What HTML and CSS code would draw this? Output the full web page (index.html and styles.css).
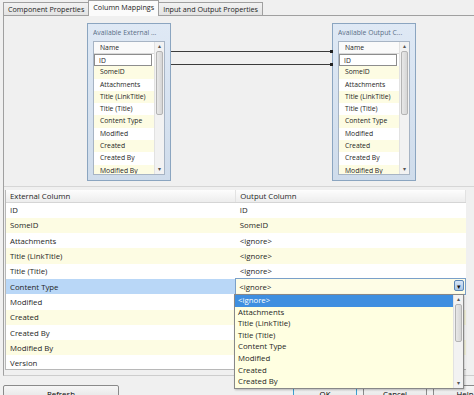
FILE: index.html
```html
<!DOCTYPE html>
<html lang="en">
<head>
    <meta charset="UTF-8">
    <title>Column Mappings</title>
    <link rel="stylesheet" href="styles.css">
</head>
<body>
<div class="window">
    <div class="tabs">
        <div class="tab">Component Properties</div>
        <div class="tab active">Column Mappings</div>
        <div class="tab">Input and Output Properties</div>
    </div>
    <div class="panel">
        <div class="diagram">
            <div class="node">
                <div class="node-title">Available External ...</div>
                <div class="node-list">
                    <div class="node-rows">
                        <div class="node-head">Name</div>
                        <div class="node-row focus">ID</div>
                        <div class="node-row alt">SomeID</div>
                        <div class="node-row">Attachments</div>
                        <div class="node-row alt">Title (LinkTitle)</div>
                        <div class="node-row">Title (Title)</div>
                        <div class="node-row alt">Content Type</div>
                        <div class="node-row">Modified</div>
                        <div class="node-row alt">Created</div>
                        <div class="node-row">Created By</div>
                        <div class="node-row alt">Modified By</div>
                    </div>
                    <div class="vscroll">
                        <span class="arr">&#9652;</span>
                        <span class="thumb"></span>
                        <span class="fill"></span>
                        <span class="arr">&#9662;</span>
                    </div>
                </div>
            </div>
            <div class="links">
                <div class="link"></div>
                <div class="link"></div>
            </div>
            <div class="node">
                <div class="node-title">Available Output C...</div>
                <div class="node-list">
                    <div class="node-rows">
                        <div class="node-head">Name</div>
                        <div class="node-row focus">ID</div>
                        <div class="node-row alt">SomeID</div>
                        <div class="node-row">Attachments</div>
                        <div class="node-row alt">Title (LinkTitle)</div>
                        <div class="node-row">Title (Title)</div>
                        <div class="node-row alt">Content Type</div>
                        <div class="node-row">Modified</div>
                        <div class="node-row alt">Created</div>
                        <div class="node-row">Created By</div>
                        <div class="node-row alt">Modified By</div>
                    </div>
                    <div class="vscroll">
                        <span class="arr">&#9652;</span>
                        <span class="thumb"></span>
                        <span class="fill"></span>
                        <span class="arr">&#9662;</span>
                    </div>
                </div>
            </div>
        </div>

        <div class="grid-wrap">
            <table class="grid">
                <thead>
                <tr><th>External Column</th><th>Output Column</th></tr>
                </thead>
                <tbody>
                <tr><td>ID</td><td>ID</td></tr>
                <tr class="alt"><td>SomeID</td><td>SomeID</td></tr>
                <tr><td>Attachments</td><td>&lt;ignore&gt;</td></tr>
                <tr class="alt"><td>Title (LinkTitle)</td><td>&lt;ignore&gt;</td></tr>
                <tr><td>Title (Title)</td><td>&lt;ignore&gt;</td></tr>
                <tr class="current"><td>Content Type</td><td class="editing"><span>&lt;ignore&gt;</span><span class="drop-btn">&#9662;</span></td></tr>
                <tr><td>Modified</td><td></td></tr>
                <tr class="alt"><td>Created</td><td></td></tr>
                <tr><td>Created By</td><td></td></tr>
                <tr class="alt"><td>Modified By</td><td></td></tr>
                <tr><td>Version</td><td></td></tr>
                </tbody>
            </table>
        </div>

        <div class="dropdown">
            <div class="drop-items">
                <div class="drop-item sel">&lt;ignore&gt;</div>
                <div class="drop-item">Attachments</div>
                <div class="drop-item">Title (LinkTitle)</div>
                <div class="drop-item">Title (Title)</div>
                <div class="drop-item">Content Type</div>
                <div class="drop-item">Modified</div>
                <div class="drop-item">Created</div>
                <div class="drop-item">Created By</div>
            </div>
            <div class="vscroll">
                <span class="arr">&#9652;</span>
                <span class="thumb"></span>
                <span class="fill"></span>
                <span class="arr">&#9662;</span>
            </div>
        </div>
    </div>

    <div class="footer">
        <button class="btn refresh">Refresh</button>
        <button class="btn ok">OK</button>
        <button class="btn">Cancel</button>
        <button class="btn">Help</button>
    </div>
</div>
</body>
</html>
```

FILE: styles.css
```css
body {
    margin: 0;
    background: #f0f0f0;
    font-family: "Open Sans", "Noto Sans", sans-serif;
    color: #1e1e1e;
}
.window {
    width: 474px;
    height: 395px;
    overflow: hidden;
    padding-left: 3px;
    box-sizing: border-box;
}
.tabs {
    display: flex;
    height: 15px;
    align-items: flex-end;
}
.tab {
    height: 13px;
    line-height: 12px;
    font-size: 7.2px;
    padding: 0 4px;
    border: 1px solid #a0a0a0;
    border-bottom: none;
    background: linear-gradient(#f2f2f2, #e3e3e3);
    box-sizing: border-box;
    margin-right: -1px;
}
.tab.active {
    height: 16px;
    line-height: 13px;
    background: #fbfbfb;
    position: relative;
    z-index: 1;
    margin-bottom: -1px;
}
.panel {
    border-top: 1px solid #a0a0a0;
    border-left: 1px solid #a0a0a0;
    border-bottom: 1px solid #cdcdcd;
    height: 361px;
    box-sizing: border-box;
    position: relative;
}

/* diagram */
.diagram {
    display: flex;
    align-items: flex-start;
    height: 171px;
    padding: 7px 0 0 83px;
    box-sizing: border-box;
    border-bottom: 1px solid #d6d6d6;
}
.node {
    width: 84px;
    height: 158px;
    box-sizing: border-box;
    border: 1px solid #8ba5c0;
    background: linear-gradient(#dfe9f5, #cfdceb);
    padding: 0 5px 5px 5px;
    display: flex;
    flex-direction: column;
}
.node-title {
    font-size: 6.8px;
    color: #5b6f86;
    height: 17px;
    line-height: 17px;
    white-space: nowrap;
    overflow: hidden;
}
.node-list {
    flex: 1;
    display: flex;
    background: #fff;
    border: 1px solid #a7b4c4;
    overflow: hidden;
}
.node-rows {
    flex: 1;
    font-size: 6.8px;
}
.node-head {
    height: 11px;
    line-height: 11px;
    padding-left: 6px;
    border-bottom: 1px solid #d8d8d8;
    background: #fafafa;
}
.node-row {
    height: 12.3px;
    line-height: 12.3px;
    padding-left: 6px;
    white-space: nowrap;
}
.node-row.alt {
    background: #fdfce3;
}
.node-row.focus {
    border: 1px solid #8d8d8d;
    box-sizing: border-box;
    padding-left: 4px;
    margin-right: 2px;
}
.vscroll {
    width: 9px;
    display: flex;
    flex-direction: column;
    background: #f2f2f2;
    border-left: 1px solid #e2e2e2;
}
.vscroll .arr {
    height: 9px;
    font-size: 6px;
    line-height: 9px;
    text-align: center;
    color: #555;
}
.vscroll .thumb {
    height: 62px;
    margin: 0 1px;
    border: 1px solid #b4b4b4;
    border-radius: 2px;
    background: linear-gradient(90deg, #e8e8e8, #d6d6d6);
}
.vscroll .fill {
    flex: 1;
}
.links {
    width: 161px;
    padding-top: 28px;
}
.link {
    height: 1px;
    background: #3b3b3b;
    margin-bottom: 12px;
    position: relative;
}
.link::after {
    content: "";
    position: absolute;
    right: -1px;
    top: -1px;
    width: 3px;
    height: 3px;
    background: #222;
}

/* grid */
.grid-wrap {
    margin: 3px 8px 0 1px;
    height: 179px;
    overflow: hidden;
    border-left: 1px solid #b8b8b8;
    border-bottom: 1px solid #b8b8b8;
    background: #fff;
}
.grid {
    width: 100%;
    border-collapse: collapse;
    font-size: 7.8px;
}
.grid th {
    height: 12px;
    font-weight: normal;
    text-align: left;
    padding: 0 0 0 4px;
    background: linear-gradient(#fdfdfd, #ededed);
    border-bottom: 1px solid #d5d5d5;
    border-right: 1px solid #e2e2e2;
}
.grid td {
    height: 15.3px;
    padding: 0 0 0 4px;
    box-sizing: border-box;
    width: 50%;
}
.grid tr.alt td {
    background: #fdfce3;
}
.grid tr.current td:first-child {
    background: #b9d7f7;
}
.grid td.editing {
    position: relative;
    background: #fefde6;
    border: 1px solid #7aa0c9;
    padding: 0 1px 0 3px;
}
.drop-btn {
    position: absolute;
    right: 1px;
    top: 1px;
    width: 10px;
    height: 11px;
    font-size: 7px;
    line-height: 11px;
    text-align: center;
    border: 1px solid #5c86b5;
    border-radius: 2px;
    background: linear-gradient(#d7e6f7, #a9c6e6);
    box-sizing: border-box;
    color: #111;
}
.dropdown {
    position: absolute;
    left: 230px;
    top: 278px;
    width: 230px;
    height: 95px;
    display: flex;
    background: #ffffe1;
    border: 1px solid #888;
    box-sizing: border-box;
    box-shadow: 1px 1px 2px rgba(0, 0, 0, 0.25);
    z-index: 2;
}
.drop-items {
    flex: 1;
    font-size: 7.8px;
}
.drop-item {
    height: 11.6px;
    line-height: 11.6px;
    padding-left: 3px;
}
.drop-item.sel {
    background: #3f8fe0;
    color: #fff;
}
.dropdown .vscroll .thumb {
    height: 36px;
}

/* footer */
.footer {
    display: flex;
    align-items: flex-start;
    padding-top: 9px;
    width: 600px;
}
.btn {
    flex: none;
    font-family: inherit;
    font-size: 7.8px;
    height: 22px;
    width: 64px;
    border: 1px solid #8a8a8a;
    border-radius: 2px;
    background: linear-gradient(#f6f6f6, #dcdcdc);
    margin-right: 6px;
    padding: 0 0 4px;
}
.btn.refresh {
    width: 116px;
    margin-right: 174px;
}
.btn.ok {
    border-color: #3c9fd1;
}
```
